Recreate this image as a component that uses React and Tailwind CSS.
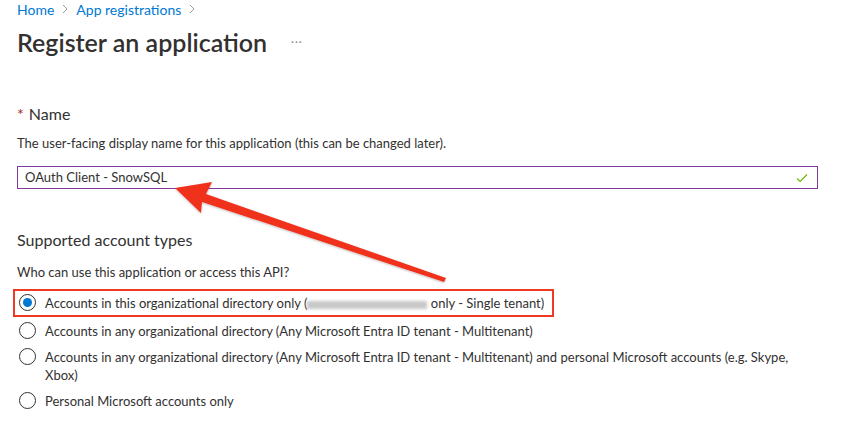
import React from 'react';

const font = { fontFamily: 'Lato, "Noto Sans", sans-serif' };

function Chevron() {
  return (
    <svg width="8" height="10" viewBox="0 0 8 10" className="mx-[7px] text-[#a19f9d]">
      <path d="M2 1l4 4-4 4" fill="none" stroke="currentColor" strokeWidth="1" />
    </svg>
  );
}

function Radio({ checked }) {
  return (
    <span className="flex h-[17px] w-[17px] shrink-0 items-center justify-center rounded-full border border-[#323130] bg-white">
      {checked && <span className="h-[9px] w-[9px] rounded-full bg-[#0078d4]" />}
    </span>
  );
}

function Option({ checked, children }) {
  return (
    <div className="flex items-start gap-[9px] text-[13px] leading-[18px] text-[#323130]">
      <Radio checked={checked} />
      <span>{children}</span>
    </div>
  );
}

export default function App() {
  return (
    <div className="relative h-[427px] w-[841px] overflow-hidden bg-white" style={font}>
      <div className="flex flex-col items-start px-[17px]">
        {/* Breadcrumb */}
        <div className="flex h-[18px] items-center text-[14px] text-[#0078d4]">
          <span>Home</span>
          <Chevron />
          <span>App registrations</span>
          <Chevron />
        </div>

        {/* Title */}
        <div className="mt-[8px] flex items-center">
          <h1 className="text-[25px] font-semibold leading-[32px] text-[#323130]">Register an application</h1>
          <span className="ml-[24px] text-[11px] tracking-[1px] text-[#8a8886]">···</span>
        </div>

        {/* Name */}
        <div className="mt-[45px] flex items-center text-[16px] leading-[22px] text-[#323130]">
          <span className="mr-[5px] text-[#a4262c]">*</span>
          <span>Name</span>
        </div>
        <p className="mt-[10px] text-[13px] leading-[16px] text-[#323130]">
          The user-facing display name for this application (this can be changed later).
        </p>
        <div className="mt-[15px] flex h-[23px] w-[801px] items-center justify-between border border-[#7e3b9a] px-[7px] text-[13px] text-[#323130]">
          <span>OAuth Client - SnowSQL</span>
          <svg width="12" height="10" viewBox="0 0 12 10" className="mr-[2px]">
            <path d="M1 5.5l3.2 3L11 1.5" fill="none" stroke="#6bb700" strokeWidth="1.1" />
          </svg>
        </div>

        {/* Supported account types */}
        <div className="mt-[40px] text-[16px] leading-[22px] text-[#323130]">Supported account types</div>
        <p className="mt-[13px] text-[13px] leading-[16px] text-[#323130]">Who can use this application or access this API?</p>

        <div className="mt-[9px] flex flex-col items-start pl-[2px]">
          <div className="-ml-[6px] border-2 border-[#ee3a24] py-[3px] pl-[4px] pr-[8px]">
            <Option checked>
              Accounts in this organizational directory only (
              <span className="inline-block h-[8px] w-[120px] bg-[#c8c8c8] align-middle blur-[1.5px]" />
              {' '}only - Single tenant)
            </Option>
          </div>
          <div className="mt-[5px] flex flex-col gap-[8px]">
            <Option>Accounts in any organizational directory (Any Microsoft Entra ID tenant - Multitenant)</Option>
            <Option>
              Accounts in any organizational directory (Any Microsoft Entra ID tenant - Multitenant) and personal Microsoft accounts (e.g. Skype,
              <br />
              Xbox)
            </Option>
            <Option>Personal Microsoft accounts only</Option>
          </div>
        </div>
      </div>

      {/* Annotation arrow */}
      <svg className="pointer-events-none absolute left-0 top-0" width="841" height="427" viewBox="0 0 841 427">
        <defs>
          <filter id="sh" x="-10%" y="-10%" width="120%" height="120%">
            <feDropShadow dx="0" dy="1" stdDeviation="1" floodColor="#000" floodOpacity="0.25" />
          </filter>
        </defs>
        <path
          d="M175 188 L212 182 L206 194 L446 278 L444 282 L202 202 L201 213 Z"
          fill="#f0321e"
          filter="url(#sh)"
        />
      </svg>
    </div>
  );
}
